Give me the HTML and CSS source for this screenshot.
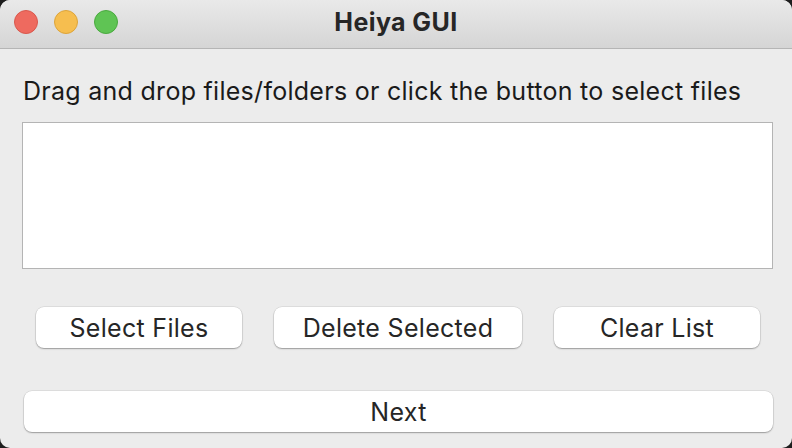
FILE: index.html
```html
<!DOCTYPE html>
<html>
<head>
<meta charset="utf-8">
<link rel="stylesheet" href="styles.css">
</head>
<body>
<div class="window">
  <div class="titlebar">
    <div class="lights">
      <span class="light red"></span>
      <span class="light yellow"></span>
      <span class="light green"></span>
    </div>
    <div class="title">Heiya GUI</div>
  </div>
  <div class="content">
    <div class="label">Drag and drop files/folders or click the button to select files</div>
    <div class="listbox"></div>
    <div class="btnrow">
      <button class="btn btn-a">Select Files</button>
      <button class="btn btn-b">Delete Selected</button>
      <button class="btn btn-a">Clear List</button>
    </div>
    <button class="btn btn-next">Next</button>
  </div>
</div>
</body>
</html>
```
FILE: styles.css
```css
html, body {
  margin: 0;
  padding: 0;
  background: #1e1e1e;
}
.window {
  width: 792px;
  height: 448px;
  background: #ececec;
  border-radius: 10px;
  overflow: hidden;
  font-family: Inter, "Liberation Sans", sans-serif;
  color: #1f1f1f;
}
.titlebar {
  position: relative;
  height: 48px;
  background: linear-gradient(#e9e9e9, #d5d5d5);
  border-bottom: 1px solid #b5b5b5;
  display: flex;
  align-items: center;
  justify-content: center;
}
.lights {
  position: absolute;
  left: 14px;
  top: 10px;
  display: flex;
  gap: 16px;
}
.light {
  width: 24px;
  height: 24px;
  border-radius: 50%;
  box-sizing: border-box;
}
.red { background: #ee6a5f; border: 1px solid #d8584d; }
.yellow { background: #f6be4f; border: 1px solid #dca43b; }
.green { background: #5fc454; border: 1px solid #4aa93f; }
.title {
  font-weight: 700;
  font-size: 25px;
  letter-spacing: 0.4px;
  color: #262626;
  margin-top: -4px;
}
.content {
  display: flex;
  flex-direction: column;
  padding: 27px 19px 0 22px;
}
.label {
  font-size: 25px;
  line-height: 30px;
  letter-spacing: 0.28px;
  color: #1a1a1a;
  margin-left: 1px;
  white-space: nowrap;
}
.listbox {
  margin-top: 16px;
  height: 145px;
  width: 749px;
  background: #ffffff;
  border: 1px solid #b4b4b4;
}
.btnrow {
  display: flex;
  gap: 32px;
  margin-top: 38px;
  padding-left: 14px;
}
.btn {
  font-family: Inter, "Liberation Sans", sans-serif;
  font-size: 25px;
  letter-spacing: 0.3px;
  color: #262626;
  background: #ffffff;
  border: none;
  border-radius: 8px;
  height: 41px;
  box-shadow: 0 0 0 0.5px rgba(0,0,0,0.12), 0 1px 1.5px rgba(0,0,0,0.3);
  padding: 0;
}
.btn-a { width: 206px; }
.btn-b { width: 248px; }
.btn-next {
  margin-top: 43px;
  margin-left: 2px;
  width: 749px;
  height: 41px;
}
```
